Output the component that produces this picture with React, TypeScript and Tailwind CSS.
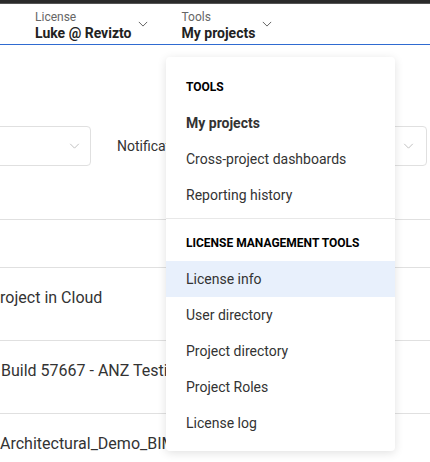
import React from 'react';

const Chevron = ({ className }: { className?: string }) => (
  <svg viewBox="0 0 12 7" className={className} fill="none" stroke="currentColor" strokeWidth="1.1">
    <path d="M1 1l5 5 5-5" />
  </svg>
);

const HeaderItem = ({ label, value }: { label: string; value: string }) => (
  <div className="flex items-start gap-[7px]">
    <div className="flex flex-col">
      <span className="text-[12px] leading-[14px] text-[#666]">{label}</span>
      <span className="text-[14px] leading-[18px] font-bold text-[#222]">{value}</span>
    </div>
    <Chevron className="w-[10px] h-[6px] mt-[11px] text-[#555]" />
  </div>
);

const toolItems = ['My projects', 'Cross-project dashboards', 'Reporting history'];
const licenseItems = ['License info', 'User directory', 'Project directory', 'Project Roles', 'License log'];

const rows = [
  { text: 'Project in Cloud', offset: '-ml-[10px]' },
  { text: 'Build 57667 - ANZ Testing', offset: 'ml-[1px]' },
  { text: 'Architectural_Demo_BIM', offset: 'ml-0' },
];

export default function App() {
  return (
    <div
      className="relative w-[430px] h-[462px] overflow-hidden bg-white"
      style={{ fontFamily: 'Roboto, "Liberation Sans", sans-serif' }}
    >
      {/* Top bar */}
      <div className="h-[4px] bg-[#2b2b2b] border-b border-[#555]" />

      {/* Header */}
      <div className="h-[41px] flex items-start gap-[33px] pl-[35px] pt-[6px] border-b border-[#2f6bd1]">
        <HeaderItem label="License" value="Luke @ Revizto" />
        <HeaderItem label="Tools" value="My projects" />
      </div>

      {/* Filters */}
      <div className="flex items-center mt-[81px] h-[40px]">
        <div className="-ml-[109px] w-[200px] h-[40px] border border-[#e0e0e0] rounded-[4px] flex items-center justify-end pr-[10px] shrink-0">
          <Chevron className="w-[11px] h-[6px] text-[#bdbdbd]" />
        </div>
        <span className="ml-[26px] text-[14px] text-[#333] shrink-0">Notifications</span>
        <div className="ml-auto mr-[3px] w-[60px] h-[40px] border border-[#e0e0e0] rounded-[4px] flex items-center justify-end pr-[12px] shrink-0">
          <Chevron className="w-[11px] h-[6px] text-[#bdbdbd]" />
        </div>
      </div>

      {/* Table */}
      <div className="mt-[53px] border-t border-[#e0e0e0]">
        <div className="h-[48px] border-b border-[#e0e0e0]" />
        {rows.map((r) => (
          <div key={r.text} className="h-[73px] border-b border-[#e0e0e0] pt-[20px] overflow-hidden whitespace-nowrap">
            <span className={`block text-[16px] leading-[20px] text-[#333] ${r.offset}`}>{r.text}</span>
          </div>
        ))}
      </div>

      {/* Tools dropdown */}
      <div className="absolute left-[166px] top-[57px] w-[229px] bg-white rounded-[4px] shadow-[0_2px_10px_rgba(0,0,0,0.12)]">
        <div className="pt-[12px] pb-[5px]">
          <div className="h-[36px] flex items-center px-[20px] text-[12px] font-bold text-black">TOOLS</div>
          {toolItems.map((t, i) => (
            <div
              key={t}
              className={`h-[36px] flex items-center px-[20px] text-[14px] text-[#333] ${i === 0 ? 'font-bold' : ''}`}
            >
              {t}
            </div>
          ))}
        </div>
        <div className="border-t border-[#e8e8e8] pt-[6px] pb-[10px]">
          <div className="h-[36px] flex items-center px-[20px] text-[12px] font-bold text-black">
            LICENSE MANAGEMENT TOOLS
          </div>
          {licenseItems.map((t, i) => (
            <div
              key={t}
              className={`h-[36px] flex items-center px-[20px] text-[14px] text-[#333] ${i === 0 ? 'bg-[#e8f0fc]' : ''}`}
            >
              {t}
            </div>
          ))}
        </div>
      </div>
    </div>
  );
}
